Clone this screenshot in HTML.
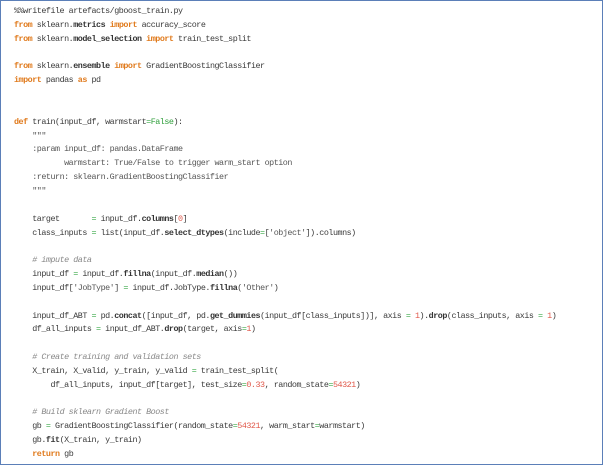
<!DOCTYPE html>
<html><head><meta charset="utf-8"><style>
html,body{margin:0;padding:0;background:#fff;}
.box{position:absolute;left:0;top:0;width:601px;height:463px;border:1px solid #5b7fb8;background:#fff;overflow:hidden;}
pre{margin:0;position:absolute;left:13px;top:4px;font-family:"Liberation Mono",monospace;font-size:8.4px;letter-spacing:-0.47px;line-height:13.85px;color:#3a3a3a;}
.k{color:#e07a1c;font-weight:bold;}
.g{color:#2e9e3a;}
.n{color:#e0584a;}
.c{color:#888;font-style:italic;}
.s{color:#555;}
.b{font-weight:bold;color:#333;}
.o{color:#3caa4a;}
</style></head><body><div class="box"><pre>%%writefile artefacts/gboost_train.py
<span class="k">from</span> sklearn.<span class="b">metrics</span> <span class="k">import</span> accuracy_score
<span class="k">from</span> sklearn.<span class="b">model_selection</span> <span class="k">import</span> train_test_split

<span class="k">from</span> sklearn.<span class="b">ensemble</span> <span class="k">import</span> GradientBoostingClassifier
<span class="k">import</span> pandas <span class="k">as</span> pd


<span class="k">def</span> train(input_df, warmstart<span class="o">=</span><span class="g">False</span>):
    <span class="s">"""</span>
    <span class="s">:param input_df: pandas.DataFrame</span>
    <span class="s">       warmstart: True/False to trigger warm_start option</span>
    <span class="s">:return: sklearn.GradientBoostingClassifier</span>
    <span class="s">"""</span>

    target       <span class="o">=</span> input_df.<span class="b">columns</span>[<span class="n">0</span>]
    class_inputs <span class="o">=</span> list(input_df.<span class="b">select_dtypes</span>(include<span class="o">=</span>[<span class="s">'object'</span>]).columns)

    <span class="c"># impute data</span>
    input_df <span class="o">=</span> input_df.<span class="b">fillna</span>(input_df.<span class="b">median</span>())
    input_df[<span class="s">'JobType'</span>] <span class="o">=</span> input_df.JobType.<span class="b">fillna</span>(<span class="s">'Other'</span>)

    input_df_ABT <span class="o">=</span> pd.<span class="b">concat</span>([input_df, pd.<span class="b">get_dummies</span>(input_df[class_inputs])], axis <span class="o">=</span> <span class="n">1</span>).<span class="b">drop</span>(class_inputs, axis <span class="o">=</span> <span class="n">1</span>)
    df_all_inputs <span class="o">=</span> input_df_ABT.<span class="b">drop</span>(target, axis<span class="o">=</span><span class="n">1</span>)

    <span class="c"># Create training and validation sets</span>
    X_train, X_valid, y_train, y_valid <span class="o">=</span> train_test_split(
        df_all_inputs, input_df[target], test_size<span class="o">=</span><span class="n">0.33</span>, random_state<span class="o">=</span><span class="n">54321</span>)

    <span class="c"># Build sklearn Gradient Boost</span>
    gb <span class="o">=</span> GradientBoostingClassifier(random_state<span class="o">=</span><span class="n">54321</span>, warm_start<span class="o">=</span>warmstart)
    gb.<span class="b">fit</span>(X_train, y_train)
    <span class="k">return</span> gb</pre></div></body></html>
